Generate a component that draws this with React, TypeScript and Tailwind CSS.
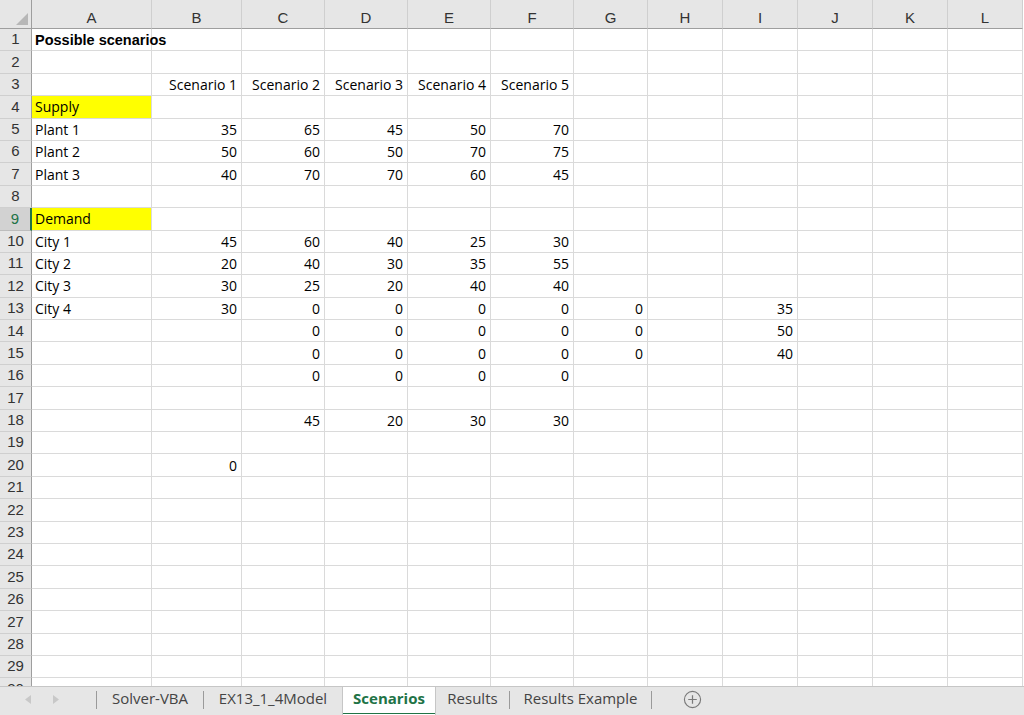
import React from 'react';

const COLS = ['A', 'B', 'C', 'D', 'E', 'F', 'G', 'H', 'I', 'J', 'K', 'L'];
const GRID = 'grid grid-cols-[32px_120px_90px_83px_83px_83px_83px_74px_75px_75px_75px_75px_75px]';

type Cell = { v: string; bold?: boolean; fill?: boolean; left?: boolean };

// sheet contents, keyed by row then column
const DATA: Record<number, Record<string, Cell>> = {
  1: { A: { v: 'Possible scenarios', bold: true, left: true } },
  3: {
    B: { v: 'Scenario 1' },
    C: { v: 'Scenario 2' },
    D: { v: 'Scenario 3' },
    E: { v: 'Scenario 4' },
    F: { v: 'Scenario 5' },
  },
  4: { A: { v: 'Supply', fill: true, left: true } },
  9: { A: { v: 'Demand', fill: true, left: true } },
  13: { G: { v: '0' }, I: { v: '35' } },
  14: { G: { v: '0' }, I: { v: '50' } },
  15: { G: { v: '0' }, I: { v: '40' } },
  16: {},
  18: { C: { v: '45' }, D: { v: '20' }, E: { v: '30' }, F: { v: '30' } },
  20: { B: { v: '0' } },
};

const rowsWithNumbers: [number, string, string[]][] = [
  [5, 'Plant 1', ['35', '65', '45', '50', '70']],
  [6, 'Plant 2', ['50', '60', '50', '70', '75']],
  [7, 'Plant 3', ['40', '70', '70', '60', '45']],
  [10, 'City 1', ['45', '60', '40', '25', '30']],
  [11, 'City 2', ['20', '40', '30', '35', '55']],
  [12, 'City 3', ['30', '25', '20', '40', '40']],
  [13, 'City 4', ['30', '0', '0', '0', '0']],
];
rowsWithNumbers.forEach(([r, label, nums]) => {
  DATA[r] = { ...(DATA[r] || {}), A: { v: label, left: true } };
  nums.forEach((n, i) => (DATA[r][COLS[i + 1]] = { v: n }));
});
[14, 15, 16].forEach((r) => {
  ['C', 'D', 'E', 'F'].forEach((c) => (DATA[r][c] = { v: '0' }));
});

const ROWS = Array.from({ length: 30 }, (_, i) => i + 1);

function CornerCell() {
  return (
    <div className="relative h-[29px] bg-[#e6e6e6] border-r border-b border-[#9e9e9e]">
      <svg className="absolute right-[3px] bottom-[3px]" width="12" height="12" viewBox="0 0 12 12">
        <polygon points="12,0 12,12 0,12" fill="#b7b7b7" />
      </svg>
    </div>
  );
}

function Sep() {
  return <div className="w-px h-[18px] bg-[#9a9a9a] self-center -mt-[3px]" />;
}

function SheetTabs() {
  return (
    <div className="flex items-stretch h-[29px] bg-[#e6e6e6] border-t border-[#c6c6c6] text-[15px] text-[#444] font-['Open_Sans',sans-serif]">
      <div className="w-[96px] flex items-center pb-[4px]">
        <svg className="ml-[25px]" width="6" height="9" viewBox="0 0 6 9">
          <polygon points="6,0 6,9 0,4.5" fill="#c8c8c8" />
        </svg>
        <svg className="ml-[22px]" width="6" height="9" viewBox="0 0 6 9">
          <polygon points="0,0 0,9 6,4.5" fill="#c8c8c8" />
        </svg>
      </div>
      <Sep />
      <div className="w-[106px] flex items-center justify-center pb-[6px]">Solver-VBA</div>
      <Sep />
      <div className="w-[138px] flex items-center justify-center pb-[6px]">EX13_1_4Model</div>
      <div className="-mt-px w-[94px] bg-white border-l border-r border-t border-[#c6c6c6] flex flex-col items-center">
        <div className="flex-1 flex items-center pb-[3px] font-bold text-[#217346]">Scenarios</div>
        <div className="h-[2px] w-[92px] bg-[#217346] mb-[1px]" />
      </div>
      <div className="w-[73px] flex items-center justify-center pb-[6px]">Results</div>
      <Sep />
      <div className="w-[141px] flex items-center justify-center pb-[6px]">Results Example</div>
      <Sep />
      <div className="ml-[31px] flex items-center pb-[3px]">
        <svg width="19" height="19" viewBox="0 0 20 20">
          <circle cx="10" cy="10" r="8.5" fill="none" stroke="#7a7a7a" strokeWidth="1.2" />
          <path d="M10 5.5v9M5.5 10h9" stroke="#7a7a7a" strokeWidth="1.3" />
        </svg>
      </div>
    </div>
  );
}

export default function App() {
  return (
    <div className="w-[1024px] h-[715px] overflow-hidden bg-white">
      <div className="h-[686px] overflow-hidden">
        {/* column headers */}
        <div className={GRID}>
          <CornerCell />
          {COLS.map((c) => (
            <div
              key={c}
              className="h-[29px] bg-[#e6e6e6] border-r border-b border-r-[#cfcfcf] border-b-[#9e9e9e] flex items-center justify-center pt-[8px] text-[15px] text-[#333] font-['Liberation_Sans',Arial,sans-serif]"
            >
              {c}
            </div>
          ))}
        </div>

        {/* body rows */}
        <div className={`${GRID} auto-rows-[22.4px]`}>
          {ROWS.map((r) => (
            <React.Fragment key={r}>
              <div
                className={`flex items-center justify-center border-b text-[15px] font-['Liberation_Sans',Arial,sans-serif] ${
                  r === 9
                    ? 'bg-[#d2d2d2] text-[#217346] border-b-[#bdbdbd] border-r-2 border-r-[#217346]'
                    : 'bg-[#e6e6e6] text-[#333] border-b-[#cfcfcf] border-r border-r-[#9e9e9e]'
                }`}
              >
                {r}
              </div>
              {COLS.map((c) => {
                const cell = DATA[r]?.[c];
                const font = cell?.bold
                  ? "font-bold text-[14.5px] pt-[2px] font-['Liberation_Sans',Arial,sans-serif]"
                  : "text-[14px] font-['Open_Sans',sans-serif]";
                return (
                  <div
                    key={c}
                    className={`flex items-center whitespace-nowrap border-r border-b border-[#dadada] text-black ${font} ${
                      cell?.left ? 'justify-start pl-[3px]' : 'justify-end pr-[4px]'
                    } ${cell?.fill ? 'bg-[#ffff00]' : ''}`}
                  >
                    {cell?.v}
                  </div>
                );
              })}
            </React.Fragment>
          ))}
        </div>
      </div>
      <SheetTabs />
    </div>
  );
}
